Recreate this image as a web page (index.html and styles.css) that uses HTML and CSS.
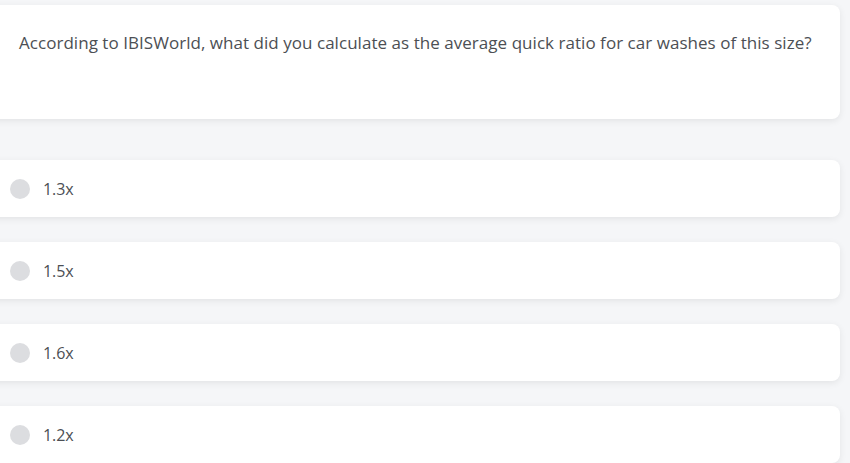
FILE: index.html
```html
<!DOCTYPE html>
<html>
<head>
<meta charset="utf-8">
<link rel="stylesheet" href="styles.css">
</head>
<body>
<div class="page">
  <div class="card question">
    <p class="qtext">According to IBISWorld, what did you calculate as the average quick ratio for car washes of this size?</p>
  </div>
  <div class="options">
    <label class="card option"><span class="radio"></span><span class="otext">1.3x</span></label>
    <label class="card option"><span class="radio"></span><span class="otext">1.5x</span></label>
    <label class="card option"><span class="radio"></span><span class="otext">1.6x</span></label>
    <label class="card option"><span class="radio"></span><span class="otext">1.2x</span></label>
  </div>
</div>
</body>
</html>
```
FILE: styles.css
```css
html, body {
  margin: 0;
  padding: 0;
  background: #f5f6f8;
  overflow: hidden;
}
body {
  font-family: "Open Sans", "Noto Sans", sans-serif;
  color: #4c4f54;
}
.page {
  width: 860px;
  margin-left: -20px;
  padding-top: 5px;
}
.card {
  background: #ffffff;
  border-radius: 8px;
  box-shadow: 0 2px 7px rgba(0, 0, 0, 0.08);
}
.question {
  height: 114px;
  box-sizing: border-box;
  padding: 26px 0 0 39px;
}
.qtext {
  margin: 0;
  font-size: 17px;
  line-height: 24px;
  letter-spacing: 0.04px;
  white-space: nowrap;
}
.options {
  margin-top: 41px;
  display: flex;
  flex-direction: column;
  gap: 25px;
}
.option {
  height: 57px;
  display: flex;
  align-items: center;
  padding-left: 30px;
  box-sizing: border-box;
}
.radio {
  width: 20px;
  height: 20px;
  border-radius: 50%;
  background: #dcdde0;
  flex: none;
}
.otext {
  margin-left: 13px;
  font-size: 16px;
  letter-spacing: -0.1px;
}
```
